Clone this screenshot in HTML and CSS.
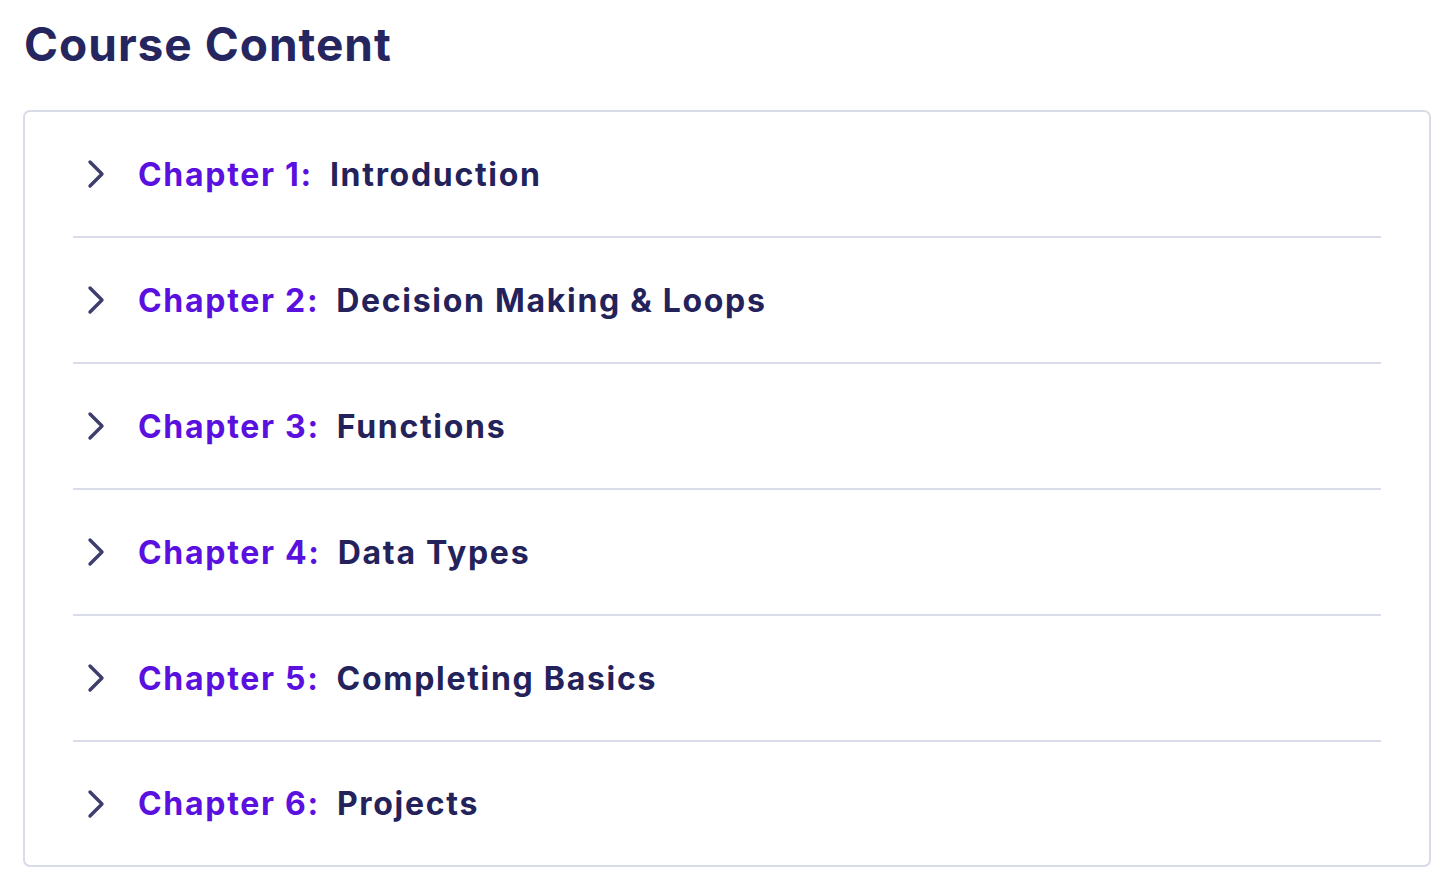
FILE: index.html
```html
<!DOCTYPE html>
<html>
<head>
<meta charset="utf-8">
<link rel="stylesheet" href="styles.css">
</head>
<body>
<h1 class="title">Course Content</h1>
<div class="card">
  <div class="row"><svg class="chev" viewBox="0 0 18 30"><path d="M3 3 L15 15 L3 27"/></svg><span class="num">Chapter 1:</span><span class="name">Introduction</span></div>
  <div class="row"><svg class="chev" viewBox="0 0 18 30"><path d="M3 3 L15 15 L3 27"/></svg><span class="num">Chapter 2:</span><span class="name">Decision Making &amp; Loops</span></div>
  <div class="row"><svg class="chev" viewBox="0 0 18 30"><path d="M3 3 L15 15 L3 27"/></svg><span class="num">Chapter 3:</span><span class="name">Functions</span></div>
  <div class="row"><svg class="chev" viewBox="0 0 18 30"><path d="M3 3 L15 15 L3 27"/></svg><span class="num">Chapter 4:</span><span class="name">Data Types</span></div>
  <div class="row"><svg class="chev" viewBox="0 0 18 30"><path d="M3 3 L15 15 L3 27"/></svg><span class="num">Chapter 5:</span><span class="name">Completing Basics</span></div>
  <div class="row"><svg class="chev" viewBox="0 0 18 30"><path d="M3 3 L15 15 L3 27"/></svg><span class="num">Chapter 6:</span><span class="name">Projects</span></div>
</div>
</body>
</html>
```
FILE: styles.css
```css
html, body {
  margin: 0;
  padding: 0;
  background: #ffffff;
}
body {
  font-family: Inter, "Noto Sans", sans-serif;
  padding: 16px 0 0 23px;
}
.title {
  margin: 0 0 0 1px;
  font-size: 46px;
  line-height: 56px;
  font-weight: 700;
  color: #252560;
  letter-spacing: 1px;
}
.card {
  margin-top: 38px;
  width: 1308px;
  padding: 0 48px;
  border: 2px solid #d7dce7;
  border-radius: 7px;
}
.row {
  height: 124px;
  display: flex;
  align-items: center;
  padding-left: 14px;
  border-bottom: 2px solid #dadde8;
}
.row:last-child {
  border-bottom: none;
  height: 123px;
}
.chev {
  width: 18px;
  height: 30px;
  flex: none;
  margin-right: 33px;
}
.chev path {
  fill: none;
  stroke: #3d3e6b;
  stroke-width: 3.4;
  stroke-linecap: round;
  stroke-linejoin: round;
}
.num {
  font-size: 32px;
  font-weight: 700;
  color: #5a10df;
  letter-spacing: 1.7px;
  margin-right: 17px;
}
.name {
  font-size: 32px;
  font-weight: 700;
  color: #24225b;
  letter-spacing: 1.7px;
}
```
